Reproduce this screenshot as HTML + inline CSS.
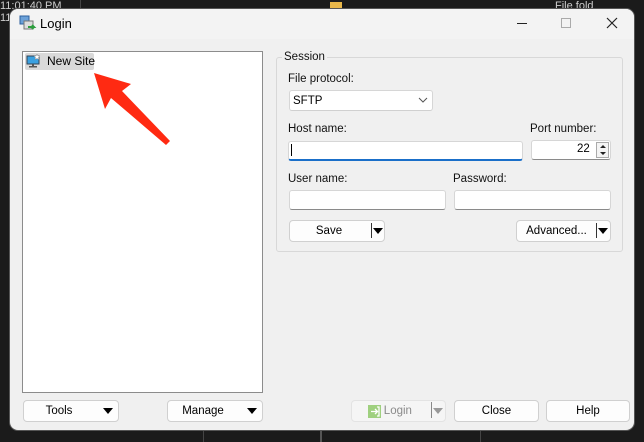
<!DOCTYPE html>
<html><head><meta charset="utf-8"><style>
*{box-sizing:border-box;margin:0;padding:0}
body{width:644px;height:442px;background:#1b1b1b;position:relative;overflow:hidden;font-family:"Liberation Sans",sans-serif;font-size:11.5px;color:#000}
.a{position:absolute}
.win{left:10px;top:9px;width:624px;height:421px;background:#f0f0f0;box-shadow:0 0 0 1px #555;border-radius:8px;overflow:hidden}
.title{left:0;top:0;width:100%;height:30px;background:#f3f3f3}
.lbl{font-size:11.5px;color:#111}
.inp{background:#fff;border:1px solid #d6d6d6;border-bottom:1px solid #8a8a8a;border-radius:3px}
.btn{background:#fdfdfd;border:1px solid #d0d0d0;border-radius:4px;text-align:center;line-height:21px;font-size:11.5px}
.tri{width:0;height:0;border-left:5px solid transparent;border-right:5px solid transparent;border-top:6px solid #000}
</style></head><body>
<div class="a" style="left:0;top:0;color:#ccc;font-size:11px;line-height:12px;">11:01:40 PM<br>11</div>
<div class="a" style="left:80px;top:0;width:1px;height:9px;background:#444"></div>
<div class="a" style="left:330px;top:2px;width:12px;height:8px;background:#e8b74a"></div>
<div class="a" style="left:555px;top:0;color:#ccc;font-size:11px">File fold</div>
<div class="a" style="left:320px;top:430px;width:2px;height:12px;background:#555"></div>
<div class="a" style="left:203px;top:430px;width:1px;height:12px;background:#444"></div>
<div class="a" style="left:480px;top:430px;width:1px;height:12px;background:#444"></div>
<div class="a win">
 <div class="a title"></div>
 <svg class="a" style="left:9px;top:6px" width="18" height="18"><rect x="1" y="1" width="9" height="8" fill="#6aa0d8" stroke="#2c5f9e"/><rect x="5" y="6" width="9" height="8" fill="#ddd" stroke="#777"/><path d="M9 12h6l-2-2M15 12l-2 2" stroke="#2e9e3e" stroke-width="2" fill="none"/></svg>
 <div class="a" style="left:30px;top:7px;font-size:13px">Login</div>
 <div class="a" style="left:507px;top:14px;width:10px;height:1px;background:#222"></div>
 <div class="a" style="left:551px;top:9px;width:10px;height:10px;border:1px solid #aaa"></div>
 <svg class="a" style="left:596px;top:8px" width="12" height="12"><path d="M1 1L11 11M11 1L1 11" stroke="#222" stroke-width="1.2"/></svg>
 <div class="a" style="left:12px;top:42px;width:241px;height:342px;background:#fff;border:1px solid #8c8c8c"></div>
 <div class="a" style="left:15px;top:44px;width:69px;height:17px;background:#d9d9d9;border-radius:2px"></div>
 <svg class="a" style="left:16px;top:45px" width="15" height="15"><rect x="1" y="2" width="12" height="8" fill="#3aa0e0" stroke="#345"/><rect x="6" y="10" width="2" height="2" fill="#555"/><rect x="3" y="12" width="8" height="1.5" fill="#555"/><path d="M11 0l1 2 2 0-1.5 1.5.5 2-2-1-2 1 .5-2L8 2h2z" fill="#fff" stroke="#888" stroke-width=".5"/></svg>
 <div class="a" style="left:37px;top:45px;font-size:12px">New Site</div>
 <div class="a" style="left:266px;top:48px;width:347px;height:195px;border:1px solid #d8d8d8;border-radius:3px"></div>
 <div class="a lbl" style="left:272px;top:42px;background:#f0f0f0;padding:0 2px">Session</div>
 <div class="a lbl" style="left:278px;top:64px">File protocol:</div>
 <div class="a inp" style="left:279px;top:81px;width:144px;height:21px;border-bottom-color:#d0d0d0"></div>
 <div class="a" style="left:283px;top:86px">SFTP</div>
 <svg class="a" style="left:408px;top:88px" width="10" height="7"><path d="M1 1l4 4 4-4" stroke="#555" fill="none"/></svg>
 <div class="a lbl" style="left:278px;top:114px">Host name:</div>
 <div class="a inp" style="left:278px;top:132px;width:235px;height:20px;border-bottom:2px solid #1a6fc9"></div>
 <div class="a" style="left:281px;top:135px;width:1px;height:12px;background:#000"></div>
 <div class="a lbl" style="left:520px;top:114px">Port number:</div>
 <div class="a inp" style="left:521px;top:131px;width:80px;height:20px"></div>
 <div class="a" style="left:567px;top:134px">22</div>
 <div class="a" style="left:586px;top:133px;width:13px;height:16px;border:1px solid #aaa;background:#f4f4f4"></div>
 <svg class="a" style="left:588px;top:134px" width="10" height="14"><path d="M2 5l3-3 3 3zM2 9l3 3 3-3z" fill="#222"/></svg>
 <div class="a lbl" style="left:278px;top:164px">User name:</div>
 <div class="a inp" style="left:279px;top:181px;width:157px;height:20px"></div>
 <div class="a lbl" style="left:443px;top:164px">Password:</div>
 <div class="a inp" style="left:444px;top:181px;width:157px;height:20px"></div>
 <div class="a btn" style="left:279px;top:211px;width:96px;height:22px;padding-right:16px">Save</div>
 <div class="a" style="left:361px;top:214px;width:1px;height:15px;background:#333"></div>
 <div class="a tri" style="left:363px;top:219px"></div>
 <div class="a btn" style="left:506px;top:211px;width:95px;height:22px;padding-right:14px">Advanced...</div>
 <div class="a" style="left:586px;top:214px;width:1px;height:15px;background:#333"></div>
 <div class="a tri" style="left:588px;top:219px"></div>
 <div class="a btn" style="left:13px;top:391px;width:96px;height:22px;padding-right:24px">Tools</div>
 <div class="a tri" style="left:93px;top:399px"></div>
 <div class="a btn" style="left:157px;top:391px;width:96px;height:22px;padding-right:24px">Manage</div>
 <div class="a tri" style="left:237px;top:399px"></div>
 <div class="a btn" style="left:341px;top:391px;width:95px;height:22px;background:#f5f5f5;border-color:#e3e3e3;color:#8a8a8a;padding-right:14px">&nbsp;&nbsp;&nbsp;&nbsp;Login</div>
 <svg class="a" style="left:358px;top:396px" width="13" height="13"><rect width="13" height="13" fill="#9fd07f"/><path d="M3 6.5h6M7 4l2.5 2.5L7 9M9 2h2v9H9" stroke="#fff" stroke-width="1.3" fill="none"/></svg>
 <div class="a" style="left:421px;top:393px;width:1px;height:16px;background:#888"></div>
 <div class="a tri" style="left:423px;top:399px;border-top-color:#999"></div>
 <div class="a btn" style="left:444px;top:391px;width:85px;height:22px">Close</div>
 <div class="a btn" style="left:536px;top:391px;width:84px;height:22px">Help</div>
</div>
<svg class="a" style="left:0;top:0" width="644" height="442"><path d="M94 73L131 84L122 91L170 141L166 145L111 98L105 109Z" fill="#ff2a12"/></svg>
</body></html>
